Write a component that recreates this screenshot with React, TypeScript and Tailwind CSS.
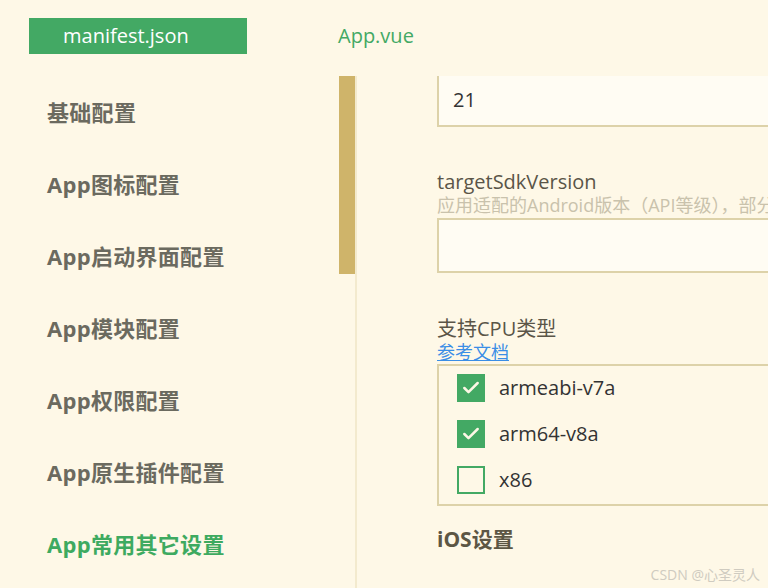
import { Check } from "lucide-react";

const navItems = [
  "基础配置",
  "App图标配置",
  "App启动界面配置",
  "App模块配置",
  "App权限配置",
  "App原生插件配置",
  "App常用其它设置",
];

const cpuTypes = [
  { name: "armeabi-v7a", checked: true },
  { name: "arm64-v8a", checked: true },
  { name: "x86", checked: false },
];

const font = { fontFamily: '"Open Sans", "Noto Sans CJK SC", sans-serif' };

const CpuCheckbox = ({ name, checked }: { name: string; checked: boolean }) => (
  <div className="flex items-center h-[28px]">
    <div
      className={
        checked
          ? "w-[28px] h-[28px] bg-[#43a964] flex items-center justify-center"
          : "w-[28px] h-[28px] border-2 border-[#43a964]"
      }
    >
      {checked && <Check size={20} strokeWidth={3} color="#fdf7e6" />}
    </div>
    <span className="ml-[14px] text-[20px] text-[#333] leading-none">{name}</span>
  </div>
);

export default function App() {
  return (
    <div className="w-[768px] h-[588px] bg-[#fef8e7] flex flex-col overflow-hidden relative" style={font}>
      {/* tabs */}
      <div className="h-[76px] shrink-0 flex items-start pt-[18px]">
        <div className="ml-[29px] w-[218px] h-[36px] bg-[#43a964] text-white text-[20px] flex items-center pl-[34px]">
          manifest.json
        </div>
        <div className="ml-[91px] h-[36px] flex items-center text-[20px] text-[#43a964]">App.vue</div>
      </div>

      <div className="flex flex-1 min-h-0">
        {/* left nav */}
        <div className="w-[339px] shrink-0 flex flex-col">
          {navItems.map((item, i) => (
            <div
              key={item}
              className={
                "h-[72px] flex items-center pl-[47px] text-[22px] font-bold tracking-[0.3px] " +
                (i === navItems.length - 1 ? "text-[#3eaa60]" : "text-[#6b6a5f]")
              }
            >
              {item}
            </div>
          ))}
        </div>
        {/* scrollbar */}
        <div className="w-[16px] shrink-0">
          <div className="h-[198px] bg-[#cfb46a]" />
        </div>
        <div className="w-[2px] shrink-0 bg-[#f3eace]" />

        {/* right content */}
        <div className="flex-1 min-w-0 overflow-hidden pl-[80px]">
          <div className="-mt-[4px] h-[55px] w-[400px] border-2 border-[#ddd2a9] bg-[#fffcf3] flex items-center pl-[14px] text-[20px] text-[#333]">
            21
          </div>

          <div className="mt-[43px] text-[20px] text-[#5a5548] leading-[24px] whitespace-nowrap">targetSdkVersion</div>
          <div className="text-[18px] text-[#c9c2ac] leading-[22px] whitespace-nowrap">
            应用适配的Android版本（API等级），部分平台
          </div>
          <div className="mt-[2px] h-[55px] w-[400px] border-2 border-[#ddd2a9] bg-[#fffcf3]" />

          <div className="mt-[44px] text-[20px] text-[#5a5548] leading-[24px]">支持CPU类型</div>
          <a className="block text-[18px] text-[#3a8ee6] underline leading-[23px] w-fit">参考文档</a>
          <div className="w-[400px] h-[142px] border-2 border-[#ddd2a9] pt-[8px] pl-[18px] flex flex-col gap-[18px]">
            {cpuTypes.map((c) => (
              <CpuCheckbox key={c.name} name={c.name} checked={c.checked} />
            ))}
          </div>

          <div className="mt-[21px] text-[21px] font-bold text-[#5c5644] leading-[24px]">iOS设置</div>
        </div>
      </div>

      <div className="absolute right-[8px] bottom-[3px] text-[14px] text-[#cfcbc0]">CSDN @心圣灵人</div>
    </div>
  );
}
